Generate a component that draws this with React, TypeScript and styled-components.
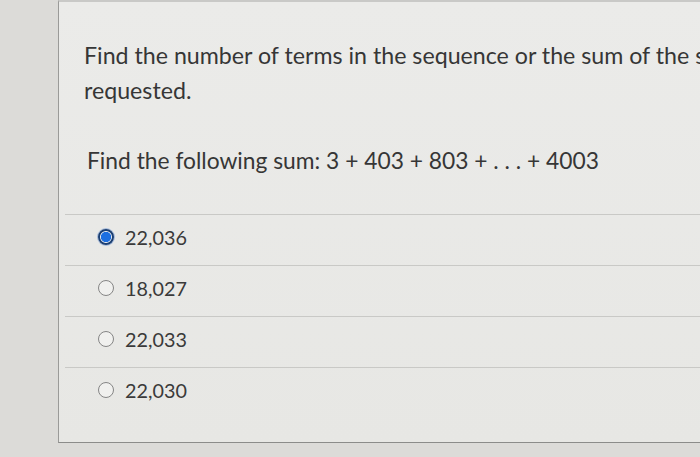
import React from "react";
import styled, { createGlobalStyle } from "styled-components";

const Global = createGlobalStyle`
  html, body { margin: 0; padding: 0; }
  body {
    width: 700px;
    height: 457px;
    overflow: hidden;
    background: #dcdbd8;
    font-family: Lato, "Open Sans", sans-serif;
    color: #363636;
  }
`;

const Screen = styled.div`
  display: flex;
  height: 457px;
  padding-left: 58px;
  box-sizing: border-box;
  overflow: hidden;
`;

const Panel = styled.section`
  width: 760px;
  height: 443px;
  flex-shrink: 0;
  box-sizing: border-box;
  background: linear-gradient(180deg, #ebebe9 0%, #e7e7e4 100%);
  border-left: 1.5px solid #9a9a98;
  border-bottom: 1.5px solid #8c8c8a;
  border-top: 2px solid #c9c9c7;
  display: flex;
  flex-direction: column;
`;

const Prompt = styled.p`
  margin: 36px 0 0 25px;
  width: 720px;
  font-size: 23.2px;
  line-height: 35px;
`;

const Question = styled.p`
  margin: 37px 0 0 28px;
  font-size: 22.8px;
  line-height: 30px;
`;

const Options = styled.ul`
  list-style: none;
  margin: 39px 0 0 6px;
  padding: 0;
`;

const Option = styled.li`
  display: flex;
  align-items: center;
  gap: 11px;
  height: 51px;
  box-sizing: border-box;
  padding: 0 0 7px 33px;
  border-top: 1px solid #c9c9c6;
  font-size: 19.8px;
  color: #3a3a3a;
`;

const Radio = styled.span<{ $checked?: boolean }>`
  width: 16px;
  height: 16px;
  border-radius: 50%;
  box-sizing: border-box;
  flex-shrink: 0;
  border: ${(p) => (p.$checked ? "2px solid #1b3f73" : "1.5px solid #858585")};
  background: ${(p) =>
    p.$checked
      ? "radial-gradient(circle, #1d6fe0 0 4.8px, #f4f6fa 5.5px)"
      : "#f0f0ee"};
  box-shadow: ${(p) => (p.$checked ? "0 0 0 1px #a7bcdc" : "none")};
`;

const answers = ["22,036", "18,027", "22,033", "22,030"];

export default function App() {
  return (
    <>
      <Global />
      <Screen>
        <Panel>
          <Prompt>
            Find the number of terms in the sequence or the sum of the series
            requested.
          </Prompt>
          <Question>Find the following sum: 3 + 403 + 803 + . . . + 4003</Question>
          <Options>
            {answers.map((a, i) => (
              <Option key={a}>
                <Radio $checked={i === 0} />
                {a}
              </Option>
            ))}
          </Options>
        </Panel>
      </Screen>
    </>
  );
}
